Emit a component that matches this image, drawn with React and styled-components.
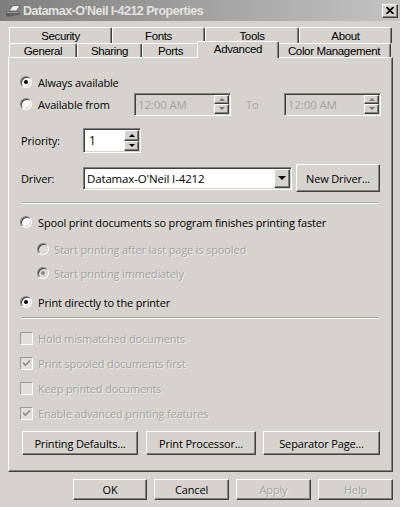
import React from 'react';
import styled, { createGlobalStyle } from 'styled-components';

const FACE = '#d6d3ce';

const GlobalStyle = createGlobalStyle`
  html, body {
    margin: 0;
    padding: 0;
    background: ${FACE};
  }
  * {
    box-sizing: border-box;
  }
`;

const Window = styled.div`
  width: 400px;
  height: 507px;
  background: ${FACE};
  display: flex;
  flex-direction: column;
  font-family: "Open Sans", "Noto Sans", sans-serif;
  font-size: 11px;
  letter-spacing: -0.15px;
  color: #000;
  overflow: hidden;
`;

const TitleBar = styled.div`
  height: 21px;
  flex: none;
  display: flex;
  align-items: center;
  padding: 0 2px 0 5px;
  background: linear-gradient(to right, #7e7e7e, #c4c4c4);
`;

const Title = styled.span`
  flex: 1;
  margin-left: 2px;
  font-family: "Liberation Sans", Arial, sans-serif;
  font-weight: bold;
  font-size: 12.5px;
  letter-spacing: -0.5px;
  color: #e4e2de;
  white-space: nowrap;
`;

const CloseButton = styled.div`
  width: 16px;
  height: 14px;
  background: ${FACE};
  border: 1px solid;
  border-color: #fff #404040 #404040 #fff;
  box-shadow: inset -1px -1px 0 #808080;
  display: flex;
  align-items: center;
  justify-content: center;
`;

const Body = styled.div`
  flex: 1;
  display: flex;
  flex-direction: column;
  padding: 6px 7px 0 8px;
`;

const TabStrip = styled.div`
  display: flex;
  flex-direction: column;
  padding-left: 1px;
`;

const TabRow = styled.div`
  display: flex;
  height: ${p => p.$h}px;
`;

const Tab = styled.div`
  position: relative;
  z-index: ${p => (p.$active ? 2 : 0)};
  flex: none;
  width: ${p => p.$w + (p.$active ? 4 : 0)}px;
  height: ${p => (p.$active ? 'calc(100% + 3px)' : '100%')};
  margin: ${p => (p.$active ? '-2px -2px -1px -2px' : '0')};
  padding-bottom: ${p => (p.$active ? 2 : 0)}px;
  background: ${FACE};
  border-top: 1px solid #fff;
  border-left: 1px solid #fff;
  border-right: 1px solid #404040;
  border-radius: 2px 2px 0 0;
  box-shadow: inset -1px 0 0 #808080;
  display: flex;
  align-items: center;
  justify-content: center;
  font-family: "Liberation Sans", Arial, sans-serif;
  font-size: 11.5px;
  letter-spacing: -0.35px;
  white-space: nowrap;
`;

const Panel = styled.div`
  height: 415px;
  flex: none;
  border: 1px solid;
  border-color: #fff #404040 #404040 #fff;
  box-shadow: inset -1px -1px 0 #808080;
  padding: 14px 12px 0 11px;
  display: flex;
  flex-direction: column;
`;

const Row = styled.div`
  flex: none;
  display: flex;
  align-items: center;
  height: ${p => p.$h || 24}px;
  margin-top: ${p => p.$mt || 0}px;
  padding-left: ${p => p.$indent || 0}px;
`;

const Option = styled.div`
  flex: none;
  display: flex;
  align-items: center;
  gap: ${p => p.$gap || 6}px;
  width: ${p => (p.$w ? `${p.$w}px` : 'auto')};
  white-space: nowrap;
  color: ${p => (p.$disabled ? '#a2a2a2' : '#000')};
  text-shadow: ${p => (p.$disabled ? '1px 1px 0 rgba(255,255,255,0.6)' : 'none')};
`;

const Radio = styled.span`
  position: relative;
  flex: none;
  width: 12px;
  height: 12px;
  border-radius: 50%;
  border: 1px solid;
  border-color: #808080 #fff #fff #808080;
  box-shadow: inset 1px 1px 0 #404040, inset -1px -1px 0 ${FACE};
  background: ${p => (p.$disabled ? '#dedcd8' : '#fff')};

  &::after {
    content: '';
    display: ${p => (p.$checked ? 'block' : 'none')};
    position: absolute;
    left: 3px;
    top: 3px;
    width: 4px;
    height: 4px;
    border-radius: 50%;
    background: ${p => (p.$disabled ? '#8a8a8a' : '#000')};
  }
`;

const CheckBox = styled.span`
  flex: none;
  width: 13px;
  height: 13px;
  border: 1px solid;
  border-color: #9a9a9a #fff #fff #9a9a9a;
  background: #e0deda;
  display: flex;
  align-items: center;
  justify-content: center;
`;

const Label = styled.span`
  flex: none;
  width: ${p => p.$w}px;
  padding-left: ${p => p.$pl || 1}px;
  color: ${p => (p.$disabled ? '#a2a2a2' : '#000')};
`;

const Field = styled.div`
  flex: none;
  display: flex;
  width: ${p => p.$w}px;
  height: ${p => p.$h}px;
  padding: 1px;
  border: 1px solid;
  border-color: #808080 #fff #fff #808080;
  box-shadow: inset 1px 1px 0 #404040, inset -1px -1px 0 ${FACE};
  background: ${p => (p.$disabled ? FACE : '#fff')};
`;

const FieldText = styled.span`
  flex: 1;
  display: flex;
  align-items: center;
  padding-left: ${p => p.$pl || 2}px;
  font-size: ${p => p.$size || 11.5}px;
  color: ${p => (p.$disabled ? '#a2a2a2' : '#000')};
  white-space: nowrap;
`;

const SpinColumn = styled.div`
  flex: none;
  width: ${p => p.$w || 15}px;
  display: flex;
  flex-direction: column;
`;

const SpinButton = styled.div`
  flex: 1;
  background: ${FACE};
  border: 1px solid;
  border-color: #fff #404040 #404040 #fff;
  box-shadow: inset -1px -1px 0 #808080;
  display: flex;
  align-items: center;
  justify-content: center;

  &::after {
    content: '';
    border-left: 3px solid transparent;
    border-right: 3px solid transparent;
    ${p =>
      p.$up
        ? `border-bottom: 3px solid ${p.$disabled ? '#777' : '#000'};`
        : `border-top: 3px solid ${p.$disabled ? '#777' : '#000'};`}
  }
`;

const DropButton = styled.div`
  flex: none;
  width: 16px;
  background: ${FACE};
  border: 1px solid;
  border-color: #fff #404040 #404040 #fff;
  box-shadow: inset -1px -1px 0 #808080;
  display: flex;
  align-items: center;
  justify-content: center;

  &::after {
    content: '';
    border-left: 4px solid transparent;
    border-right: 4px solid transparent;
    border-top: 4px solid #000;
  }
`;

const Button = styled.div`
  flex: none;
  width: ${p => p.$w}px;
  height: ${p => p.$h || 24}px;
  margin-left: ${p => p.$ml || 0}px;
  background: ${FACE};
  border: 1px solid;
  border-color: #fff #404040 #404040 #fff;
  box-shadow: inset -1px -1px 0 #808080;
  display: flex;
  align-items: center;
  justify-content: center;
  white-space: nowrap;
  color: ${p => (p.$disabled ? '#a2a2a2' : '#000')};
  text-shadow: ${p => (p.$disabled ? '1px 1px 0 rgba(255,255,255,0.6)' : 'none')};
`;

const Separator = styled.div`
  flex: none;
  height: 2px;
  margin: ${p => p.$mt || 0}px 2px 0 2px;
  border-top: 1px solid #a6a6a6;
  border-bottom: 1px solid #fff;
`;

const Footer = styled.div`
  display: flex;
  justify-content: flex-end;
  gap: 7px;
  margin-top: 7px;
`;

const PrinterIcon = () => (
  <svg width="16" height="14" viewBox="0 0 16 14">
    <path d="M4 7 L8 1.5 L15 1.5 L11.5 7 Z" fill="#eeeeee" stroke="#5a5a5a" strokeWidth="0.8" />
    <path d="M1 7.5 L14.5 7.5 L15 10.5 L2.5 13 L1 11 Z" fill="#5f5f5f" />
    <path d="M2 8.5 L13.5 8.5" stroke="#9a9a9a" strokeWidth="1" />
  </svg>
);

const CloseIcon = () => (
  <svg width="8" height="7" viewBox="0 0 8 7">
    <path d="M0.5 0 L7.5 7 M7.5 0 L0.5 7" stroke="#000" strokeWidth="1.8" />
  </svg>
);

const CheckMark = () => (
  <svg width="9" height="8" viewBox="0 0 9 8">
    <path d="M1 3.8 L3.5 6.2 L8 1.4" fill="none" stroke="#8c8c8c" strokeWidth="1.6" />
  </svg>
);

const Spin = ({ disabled }) => (
  <SpinColumn>
    <SpinButton $up $disabled={disabled} />
    <SpinButton $disabled={disabled} />
  </SpinColumn>
);

const topTabs = [
  { label: 'Security', w: 103 },
  { label: 'Fonts', w: 93 },
  { label: 'Tools', w: 94 },
  { label: 'About', w: 93 },
];

const bottomTabs = [
  { label: 'General', w: 68 },
  { label: 'Sharing', w: 65 },
  { label: 'Ports', w: 57 },
  { label: 'Advanced', w: 78, active: true },
  { label: 'Color Management', w: 114 },
];

const checks = [
  { label: 'Hold mismatched documents', checked: false },
  { label: 'Print spooled documents first', checked: true },
  { label: 'Keep printed documents', checked: false },
  { label: 'Enable advanced printing features', checked: true },
];

export default function App() {
  return (
    <>
      <GlobalStyle />
      <Window>
        <TitleBar>
          <PrinterIcon />
          <Title>Datamax-O'Neil I-4212 Properties</Title>
          <CloseButton>
            <CloseIcon />
          </CloseButton>
        </TitleBar>

        <Body>
          <TabStrip>
            <TabRow $h={16}>
              {topTabs.map(t => (
                <Tab key={t.label} $w={t.w}>{t.label}</Tab>
              ))}
            </TabRow>
            <TabRow $h={14}>
              {bottomTabs.map(t => (
                <Tab key={t.label} $w={t.w} $active={t.active}>{t.label}</Tab>
              ))}
            </TabRow>
          </TabStrip>

          <Panel>
            <Row $h={20}>
              <Option>
                <Radio $checked />
                Always available
              </Option>
            </Row>
            <Row $h={24}>
              <Option $w={114}>
                <Radio />
                Available from
              </Option>
              <Field $w={97} $h={23} $disabled>
                <FieldText $disabled>12:00 AM</FieldText>
                <Spin disabled />
              </Field>
              <Label $w={53} $pl={15} $disabled>To</Label>
              <Field $w={97} $h={23} $disabled>
                <FieldText $disabled>12:00 AM</FieldText>
                <Spin disabled />
              </Field>
            </Row>

            <Row $h={25} $mt={12}>
              <Label $w={63}>Priority:</Label>
              <Field $w={58} $h={25}>
                <FieldText $pl={4} $size={12}>1</FieldText>
                <Spin />
              </Field>
            </Row>

            <Row $h={28} $mt={11}>
              <Label $w={63}>Driver:</Label>
              <Field $w={209} $h={23}>
                <FieldText $size={11.5}>Datamax-O'Neil I-4212</FieldText>
                <DropButton />
              </Field>
              <Button $w={84} $h={28} $ml={4}>New Driver...</Button>
            </Row>

            <Separator $mt={10} />

            <Row $mt={6}>
              <Option>
                <Radio />
                Spool print documents so program finishes printing faster
              </Option>
            </Row>
            <Row $mt={3} $indent={17}>
              <Option $disabled $gap={5}>
                <Radio $disabled />
                Start printing after last page is spooled
              </Option>
            </Row>
            <Row $indent={17}>
              <Option $disabled $gap={5}>
                <Radio $disabled $checked />
                Start printing immediately
              </Option>
            </Row>
            <Row $mt={5}>
              <Option>
                <Radio $checked />
                Print directly to the printer
              </Option>
            </Row>

            <Separator $mt={3} />

            {checks.map((c, i) => (
              <Row key={c.label} $mt={i === 0 ? 7 : 1}>
                <Option $disabled $gap={5}>
                  <CheckBox>{c.checked && <CheckMark />}</CheckBox>
                  {c.label}
                </Option>
              </Row>
            ))}

            <Row $mt={6}>
              <Button $w={116} $ml={2}>Printing Defaults...</Button>
              <Button $w={110} $ml={8}>Print Processor...</Button>
              <Button $w={117} $ml={7}>Separator Page...</Button>
            </Row>
          </Panel>

          <Footer>
            <Button $w={74} $h={21}>OK</Button>
            <Button $w={75} $h={21}>Cancel</Button>
            <Button $w={75} $h={21} $disabled>Apply</Button>
            <Button $w={75} $h={21} $disabled>Help</Button>
          </Footer>
        </Body>
      </Window>
    </>
  );
}
